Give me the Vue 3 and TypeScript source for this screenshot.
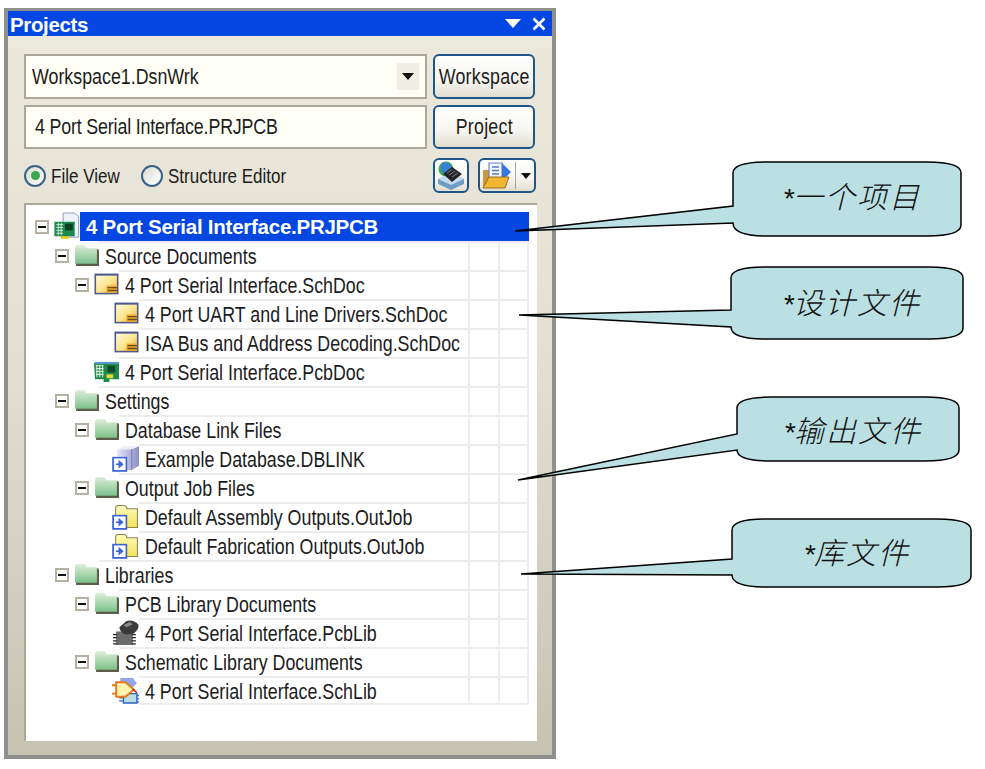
<script setup lang="ts">
type TreeRow = {
  label: string;
  depth: number;
  icon: string;
  open?: boolean;
};

type Callout = {
  text: string;
  x: number;
  y: number;
  w: number;
  h: number;
  tip: [number, number];
  joinTop: number;
  joinBottom: number;
  textX: number;
  textY: number;
};

const rows: TreeRow[] = [
  { label: "Source Documents", depth: 1, icon: "folder", open: true },
  { label: "4 Port Serial Interface.SchDoc", depth: 2, icon: "sch", open: true },
  { label: "4 Port UART and Line Drivers.SchDoc", depth: 3, icon: "sch" },
  { label: "ISA Bus and Address Decoding.SchDoc", depth: 3, icon: "sch" },
  { label: "4 Port Serial Interface.PcbDoc", depth: 2, icon: "pcb" },
  { label: "Settings", depth: 1, icon: "folder", open: true },
  { label: "Database Link Files", depth: 2, icon: "folder", open: true },
  { label: "Example Database.DBLINK", depth: 3, icon: "db" },
  { label: "Output Job Files", depth: 2, icon: "folder", open: true },
  { label: "Default Assembly Outputs.OutJob", depth: 3, icon: "job" },
  { label: "Default Fabrication Outputs.OutJob", depth: 3, icon: "job" },
  { label: "Libraries", depth: 1, icon: "folder", open: true },
  { label: "PCB Library Documents", depth: 2, icon: "folder", open: true },
  { label: "4 Port Serial Interface.PcbLib", depth: 3, icon: "pcblib" },
  { label: "Schematic Library Documents", depth: 2, icon: "folder", open: true },
  { label: "4 Port Serial Interface.SchLib", depth: 3, icon: "schlib" }
];

const callouts: Callout[] = [
  { text: "一个项目", x: 733, y: 162, w: 228, h: 74, tip: [515, 231], joinTop: 206, joinBottom: 223, textX: 784, textY: 208 },
  { text: "设计文件", x: 731, y: 267, w: 232, h: 72, tip: [519, 315], joinTop: 310, joinBottom: 327, textX: 784, textY: 314 },
  { text: "输出文件", x: 737, y: 397, w: 222, h: 64, tip: [518, 480], joinTop: 434, joinBottom: 450, textX: 785, textY: 442 },
  { text: "库文件", x: 732, y: 519, w: 239, h: 68, tip: [521, 574], joinTop: 559, joinBottom: 575, textX: 805, textY: 564 }
];

const wideIcons = ["db", "job", "pcblib", "schlib"];

function bubblePath(c: Callout): string {
  const rx = 34;
  const ry = 11;
  const r = c.x + c.w;
  const b = c.y + c.h;
  return [
    `M${c.tip[0]} ${c.tip[1]}`,
    `L${c.x} ${c.joinTop}`,
    `V${c.y + ry}`,
    `Q${c.x} ${c.y} ${c.x + rx} ${c.y}`,
    `H${r - rx}`,
    `Q${r} ${c.y} ${r} ${c.y + ry}`,
    `V${b - ry}`,
    `Q${r} ${b} ${r - rx} ${b}`,
    `H${c.x + rx}`,
    `Q${c.x} ${b} ${c.x} ${c.joinBottom}`,
    "Z"
  ].join(" ");
}
</script>

<template>
  <div class="page">
    <svg class="defs" width="0" height="0" aria-hidden="true">
      <defs>
        <linearGradient id="folderGrad" x1="0" y1="0" x2="0" y2="1">
          <stop offset="0%" stop-color="#dcefd8" />
          <stop offset="100%" stop-color="#7cc08a" />
        </linearGradient>
        <linearGradient id="schGrad" x1="0" y1="0" x2="1" y2="1">
          <stop offset="0%" stop-color="#fffcd8" />
          <stop offset="55%" stop-color="#fde48c" />
          <stop offset="100%" stop-color="#f0a828" />
        </linearGradient>
        <linearGradient id="jobGrad" x1="0" y1="0" x2="0" y2="1">
          <stop offset="0%" stop-color="#fffbb8" />
          <stop offset="100%" stop-color="#f6e25a" />
        </linearGradient>
        <linearGradient id="dbGrad" x1="0" y1="0" x2="1" y2="0">
          <stop offset="0%" stop-color="#e6e8f6" />
          <stop offset="100%" stop-color="#8c90c8" />
        </linearGradient>
        <symbol id="i-folder" viewBox="0 0 24 24">
          <path d="M2 22 V6 H23 Q24 6 24 8 V22 Z" fill="#5e5c4a" />
          <path d="M1 20 V5 Q1 2 4 2 H9 Q11 2 12 5 H22 V20 Z" fill="url(#folderGrad)" />
        </symbol>
        <symbol id="i-sch" viewBox="0 0 24 24">
          <rect x="0.500" y="1.500" width="23" height="20" fill="#4c5a8e" />
          <rect x="2" y="3.500" width="20" height="16.500" fill="url(#schGrad)" />
          <path d="M12 13 H22 V20 H12 Z" fill="#eeaa2c" />
          <path d="M13 15 H22 M13 17.800 H22" stroke="#6c4a20" stroke-width="1.300" />
        </symbol>
        <symbol id="i-pcb" viewBox="0 0 26 24">
          <path d="M0 3 H26 V20 H16 V23 H10 V20 H1 Z" fill="#1f8a4a" />
          <path d="M1 2 H26 V4 H1 Z" fill="#5a9ce0" />
          <path d="M2 6 H10 M2 9 H10 M2 12 H10 M2 15 H10 M3 5 V18 M6 5 V18 M9 5 V18" stroke="#d8eedc" stroke-width="1.100" />
          <rect x="14" y="6" width="8" height="7" fill="#0d4a2a" />
          <rect x="13" y="15" width="7" height="4" fill="#e8d838" />
        </symbol>
        <symbol id="i-arrowbox" viewBox="0 0 14 14">
          <rect x="1" y="1" width="12" height="12" fill="#fff" stroke="#3a64d8" stroke-width="1.600" />
          <path d="M3.500 7 H8 M6.500 4.500 L9.500 7 L6.500 9.500 Z" fill="#3a64d8" stroke="#3a64d8" stroke-width="1.300" />
        </symbol>
        <symbol id="i-db" viewBox="0 0 26 26">
          <path d="M5 4 L19 4 L26 1 V20 L19 24 H5 Z" fill="url(#dbGrad)" />
          <path d="M5 4 L12 1 H26 L19 4 Z" fill="#eceefa" />
          <path d="M19 4 V24" stroke="#7a7eb8" stroke-width="1" />
          <use href="#i-arrowbox" x="0" y="11" width="15" height="15" />
        </symbol>
        <symbol id="i-job" viewBox="0 0 26 26">
          <path d="M3 24 V5 Q3 2 6 2 H12 Q14 2 15 5 H25 V24 Z" fill="#8a8450" />
          <path d="M4 23 V5 Q4 3 6 3 H12 Q13.500 3 14 6 H24 V23 Z" fill="url(#jobGrad)" />
          <use href="#i-arrowbox" x="0" y="11" width="15" height="15" />
        </symbol>
        <symbol id="i-pcblib" viewBox="0 0 26 26">
          <path d="M4 12 H20 V25 H4 Z" fill="#6c6c6c" />
          <path d="M1 15 H5 M1 18 H5 M1 21 H5 M1 24 H5 M19 15 H23 M19 18 H23 M19 21 H23 M19 24 H23" stroke="#222" stroke-width="1.300" />
          <path d="M7 8 L14 2 Q20 0 25 5 Q27 9 21 14 L14 15 Q8 14 7 8 Z" fill="#3a3a3c" />
          <path d="M11 6 L17 3 L20 5 L14 8 Z" fill="#8a8a8c" />
        </symbol>
        <symbol id="i-schlib" viewBox="0 0 26 26">
          <path d="M8 1 H20 L24 6 L20 10 H8 Z" fill="#90a8e8" />
          <path d="M11 16 H24 V25 H11 Z" fill="#b8dede" stroke="#2a62c8" stroke-width="1.300" />
          <path d="M7 17 H11 M7 20 H11 M7 23 H11 M24 18 H26 M24 21 H26 M24 24 H26" stroke="#2a62c8" stroke-width="1.300" />
          <path d="M4 5 H13 L21 12 L13 19 H4 Z" fill="#fff4b0" stroke="#e87818" stroke-width="1.800" />
          <path d="M0 8 H4 M0 16 H4" stroke="#e87818" stroke-width="1.800" />
          <path d="M20 12 L24 15" stroke="#c02020" stroke-width="1.500" />
        </symbol>
        <symbol id="i-project" viewBox="0 0 26 30">
          <path d="M9 1 H21 L25 5 V26 H9 Z" fill="#eef2fb" stroke="#8c98c0" stroke-width="1" />
          <path d="M0 10 H21 V25 H14 V28 H7 V25 H0 Z" fill="#1c8a4c" />
          <path d="M2 13 H9 M2 16 H9 M2 19 H9 M2 22 H9 M4 11 V24 M7 11 V24" stroke="#cfe9d2" stroke-width="1" />
          <rect x="11" y="12" width="8" height="7" fill="#0a3f22" />
          <rect x="7" y="25" width="8" height="3" fill="#e8d020" />
        </symbol>
      </defs>
    </svg>

    <section class="panel">
      <header class="titleBar">
        <span class="titleText">Projects</span>
        <span class="titleTools">
          <svg width="16" height="10" viewBox="0 0 16 10"><path d="M0 0 H16 L8 9 Z" fill="#fff" /></svg>
          <svg width="14" height="14" viewBox="0 0 14 14"><path d="M1.500 1.500 L12.500 12.500 M12.500 1.500 L1.500 12.500" stroke="#fff" stroke-width="2.600" /></svg>
        </span>
      </header>

      <div class="panelBody">
        <div class="fieldGrid">
          <div class="field comboField">
            <span class="narrow">Workspace1.DsnWrk</span>
            <span class="comboArrow"><i></i></span>
          </div>
          <button class="btn"><span class="narrow center">Workspace</span></button>
          <div class="field projectField"><span class="narrow">4 Port Serial Interface.PRJPCB</span></div>
          <button class="btn"><span class="narrow center">Project</span></button>
        </div>

        <div class="viewRow">
          <label class="radio"><i class="radioDot on"></i><span class="narrow">File View</span></label>
          <label class="radio radioSecond"><i class="radioDot"></i><span class="narrow">Structure Editor</span></label>
          <button class="iconBtn compileBtn">
            <svg width="30" height="30" viewBox="0 0 30 30">
              <circle cx="10" cy="8" r="7.500" fill="#3aa850" />
              <path d="M6 2 Q14 0 17 8 L9 14 Q3 9 6 2 Z" fill="#3a7fd8" />
              <path d="M2 18 L15 12 L28 18 V23 L15 29 L2 23 Z" fill="#6f9cc6" />
              <path d="M2 18 L15 24 L28 18 L15 12 Z" fill="#c6dcec" />
              <path d="M7 13 L16 6 L26 13 L16 21 Z" fill="#23252b" />
              <path d="M11 12 L16 8.500 M13 14 L19 10 M16 16 L22 12" stroke="#7c8088" stroke-width="1" />
            </svg>
          </button>
          <button class="iconBtn docBtn">
            <svg width="31" height="29" viewBox="0 0 31 29">
              <path d="M1 9 H8 V26 H1 Z" fill="#c89a3a" />
              <path d="M7 2 H20 V20 H7 Z" fill="#f4f6ff" stroke="#6c84c8" stroke-width="1.200" />
              <path d="M10 6 H17 M10 9.500 H17 M10 13 H17" stroke="#5a78c8" stroke-width="1.500" />
              <path d="M20 2 L29 11 L20 20 Z" fill="#3a74e0" />
              <path d="M1 27 L7 16 H27 L23 27 Z" fill="#f2b632" stroke="#96701c" stroke-width="1" />
            </svg>
            <span class="docDivider"></span>
            <i class="miniArrow"></i>
          </button>
        </div>

        <div class="tree">
          <div class="rootRow">
            <span class="expander"></span>
            <svg class="rootIcon"><use href="#i-project" /></svg>
            <span class="rootLabel">4 Port Serial Interface.PRJPCB</span>
          </div>
          <div
            v-for="(row, index) in rows"
            :key="`${index}-${row.label}`"
            class="treeRow"
            :class="[`depth${row.depth}`, { leaf: !row.open }]"
          >
            <span v-if="row.open" class="expander"></span>
            <svg class="rowIcon" :class="{ wide: wideIcons.includes(row.icon) }"><use :href="`#i-${row.icon}`" /></svg>
            <span class="rowName"><span class="narrow">{{ row.label }}</span></span>
            <span class="rowCol"></span>
            <span class="rowCol"></span>
          </div>
        </div>
      </div>
    </section>

    <svg class="callouts" width="985" height="769" viewBox="0 0 985 769">
      <g v-for="c in callouts" :key="c.text">
        <path :d="bubblePath(c)" fill="#bbe0e3" stroke="#000" stroke-width="1.500" stroke-linejoin="miter" />
        <text :x="c.textX" :y="c.textY" class="calloutText"><tspan class="star">*</tspan>{{ c.text }}</text>
      </g>
    </svg>
  </div>
</template>

<style>
html,
body {
  margin: 0;
  background: #fff;
}
</style>

<style scoped>
.page {
  position: relative;
  width: 985px;
  height: 769px;
  overflow: hidden;
  background: #fff;
  font-family: "Liberation Sans", Arial, sans-serif;
  color: #1c1c1c;
}

.defs {
  position: absolute;
}

/* the reference text is tall and condensed, no narrow family is installed */
.narrow {
  display: inline-block;
  flex: none;
  white-space: nowrap;
  transform: scaleX(0.81);
  transform-origin: 0 50%;
}

.narrow.center {
  transform-origin: 50% 50%;
}

.panel {
  box-sizing: border-box;
  width: 552px;
  height: 751px;
  margin: 8px 0 0 4px;
  border: solid #8f8f8d;
  border-width: 3px 4px 4px;
  display: flex;
  flex-direction: column;
  background: linear-gradient(180deg, #ece9dd 0%, #e4e1d3 45%, #c6c3b3 100%);
}

.titleBar {
  height: 25px;
  flex: none;
  display: flex;
  align-items: center;
  justify-content: space-between;
  padding: 0 6px 0 2px;
  background: #0446e2;
  color: #fff;
}

.titleText {
  padding-top: 2px;
  font-size: 20.500px;
  font-weight: 700;
  letter-spacing: -0.35px;
}

.titleTools {
  display: flex;
  align-items: center;
  gap: 11px;
}

.panelBody {
  flex: 1;
  display: flex;
  flex-direction: column;
  padding: 18px 15px 14px 16px;
  min-height: 0;
}

.fieldGrid {
  display: grid;
  grid-template-columns: 403px 102px;
  grid-template-rows: 45px 44px;
  column-gap: 6px;
  row-gap: 6px;
}

.field {
  box-sizing: border-box;
  display: flex;
  align-items: center;
  border: 2px solid #aca899;
  background: #fffff6;
  font-size: 22px;
}

.comboField {
  justify-content: space-between;
  padding: 0 6px;
}

.comboArrow {
  width: 22px;
  height: 27px;
  display: grid;
  place-items: center;
  background: #f0eee2;
}

.comboArrow i {
  width: 0;
  height: 0;
  border: 6px solid transparent;
  border-top: 7px solid #111;
  border-bottom: 0;
}

.projectField {
  padding-left: 9px;
  letter-spacing: -0.2px;
}

.btn {
  box-sizing: border-box;
  display: flex;
  align-items: center;
  justify-content: center;
  border: 2px solid #1f5688;
  border-radius: 6px;
  padding: 0;
  overflow: hidden;
  background: linear-gradient(180deg, #fff 0%, #f6f5ef 60%, #e2dfd0 100%);
  font-family: inherit;
  font-size: 22px;
  letter-spacing: 0.3px;
  color: #1c1c1c;
}

.viewRow {
  height: 35px;
  margin: 9px 1px 0 0;
  display: flex;
  align-items: center;
}

.radio {
  display: flex;
  align-items: center;
  gap: 5px;
  font-size: 21px;
}

.radioSecond {
  margin-left: 5px;
}

.radioDot {
  box-sizing: border-box;
  width: 22px;
  height: 22px;
  border-radius: 50%;
  border: 2px solid #3a6288;
  background: linear-gradient(135deg, #dcdcd2, #fff);
  display: grid;
  place-items: center;
}

.radioDot.on::after {
  content: "";
  width: 9px;
  height: 9px;
  border-radius: 50%;
  background: #3aa84c;
}

.iconBtn {
  box-sizing: border-box;
  height: 35px;
  padding: 0;
  border: 2px solid #1f5688;
  border-radius: 6px;
  background: linear-gradient(180deg, #fff 0%, #f6f5ef 60%, #e2dfd0 100%);
  display: flex;
  align-items: center;
}

.compileBtn {
  width: 36px;
  margin-left: auto;
  justify-content: center;
}

.docBtn {
  width: 58px;
  margin-left: 9px;
  padding-left: 2px;
}

.docDivider {
  width: 1px;
  height: 27px;
  margin-left: 2px;
  background: #a8a698;
}

.miniArrow {
  width: 0;
  height: 0;
  margin-left: 5px;
  border: 5px solid transparent;
  border-top: 6px solid #111;
  border-bottom: 0;
}

.tree {
  box-sizing: border-box;
  flex: 1;
  margin-top: 10px;
  padding-top: 7px;
  border: solid #aca899;
  border-width: 2px 0 0 2px;
  background: #fff;
  font-size: 22px;
}

.expander {
  position: relative;
  box-sizing: border-box;
  flex: none;
  width: 14px;
  height: 14px;
  border: 2px solid #b5b2a4;
  background: #fff;
}

.expander::after {
  content: "";
  position: absolute;
  left: 1px;
  right: 1px;
  top: 4px;
  height: 2px;
  background: #111;
}

.rootRow {
  height: 29px;
  display: flex;
  align-items: center;
  margin-right: 8px;
  padding-left: 9px;
}

.rootIcon {
  flex: none;
  width: 26px;
  height: 29px;
  margin-left: 5px;
}

.rootLabel {
  flex: 1;
  height: 29px;
  line-height: 29px;
  box-sizing: border-box;
  padding-left: 6px;
  background: #0446e2;
  color: #fff;
  font-size: 20.500px;
  font-weight: 700;
  letter-spacing: -0.25px;
  white-space: nowrap;
}

.treeRow {
  box-sizing: border-box;
  height: 29px;
  display: flex;
  align-items: center;
  margin-right: 8px;
}

.treeRow:last-child .rowName,
.treeRow:last-child .rowCol {
  box-shadow: inset 0 -2px 0 #ececec;
}

.depth1 {
  padding-left: 29px;
}

.depth2 {
  padding-left: 49px;
}

.depth2.leaf {
  padding-left: 63px;
}

.depth3 {
  padding-left: 83px;
}

.rowIcon {
  flex: none;
  width: 25px;
  height: 25px;
  margin-left: 5px;
}

.rowIcon.wide {
  width: 27px;
  height: 27px;
  margin-left: 3px;
}

.rowName {
  box-sizing: border-box;
  flex: 1;
  height: 100%;
  min-width: 0;
  line-height: 27px;
  padding-left: 6px;
  border-top: 2px solid #ececec;
  white-space: nowrap;
}

.rowCol {
  box-sizing: border-box;
  flex: none;
  width: 30px;
  height: 100%;
  border-top: 2px solid #ececec;
  border-left: 2px solid #ececec;
}

.rowCol:last-child {
  width: 31px;
  border-right: 2px solid #ececec;
}

.callouts {
  position: absolute;
  left: 0;
  top: 0;
  pointer-events: none;
}

.calloutText {
  font-family: "Noto Sans CJK SC", sans-serif;
  font-size: 30px;
  font-style: italic;
  font-weight: 300;
  letter-spacing: 2px;
  fill: #111;
}

.star {
  font-family: "Liberation Sans", sans-serif;
  font-style: normal;
  font-weight: 400;
  font-size: 28px;
  letter-spacing: -2px;
}
</style>
